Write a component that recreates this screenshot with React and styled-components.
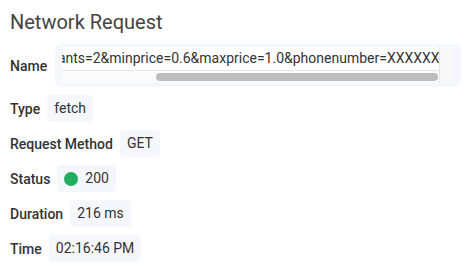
import React, { useEffect, useRef, useState } from 'react';
import styled, { createGlobalStyle } from 'styled-components';

const GlobalStyle = createGlobalStyle`
  body {
    margin: 0;
    background: #fff;
    font-family: Roboto, "Liberation Sans", Arial, sans-serif;
    color: #333;
  }
`;

const Panel = styled.article`
  padding: 10px 10px 4px 10px;
`;

const Title = styled.h1`
  margin: 0 0 10px 0;
  font-size: 20px;
  line-height: 24px;
  font-weight: 400;
  color: #444;
`;

const Rows = styled.section`
  display: flex;
  flex-direction: column;
  gap: 8px;
`;

const Row = styled.div`
  display: flex;
  align-items: center;
  gap: ${p => (p.$wide ? '8px' : '7px')};
`;

const Label = styled.span`
  font-size: 14px;
  font-weight: 500;
  color: #333;
  white-space: nowrap;
  flex-shrink: 0;
`;

const Chip = styled.span`
  display: inline-flex;
  align-items: center;
  gap: 7px;
  padding: 5px 7px;
  line-height: 17px;
  font-size: 14px;
  background: #f6f7fd;
  border-radius: 4px;
  color: #333;
`;

const UrlBox = styled.div`
  flex: 1;
  min-width: 0;
  background: #f6f7fd;
  border-radius: 7px;
  padding: 3px 8px 4px 7px;
`;

const Frame = styled.div`
  display: grid;
  grid-template-columns: 1fr 14px;
  grid-template-rows: 23px 13px;
`;

const Viewport = styled.div`
  overflow: hidden;
  background: #fff;
  white-space: nowrap;
  font-size: 14px;
  line-height: 23px;
  color: #333;
`;

const VTrack = styled.div`
  grid-row: 1 / span 2;
  grid-column: 2;
  background: #f8f8f8;
  border-left: 1px solid #e6e6e6;
`;

const HTrack = styled.div`
  position: relative;
  background: #fbfbfb;
  border-top: 1px solid #e6e6e6;
`;

const Thumb = styled.div`
  position: absolute;
  top: 2px;
  height: 8px;
  border-radius: 4px;
  background: #bdbdbd;
`;

const Dot = styled.span`
  width: 14px;
  height: 14px;
  border-radius: 50%;
  background: ${p => p.color};
`;

const url = 'api/activity?participants=2&minprice=0.6&maxprice=1.0&phonenumber=XXXXXX';

function UrlField({ value }) {
  const viewRef = useRef(null);
  const [thumb, setThumb] = useState({ left: 0, width: 0 });

  useEffect(() => {
    const el = viewRef.current;
    if (!el) return;
    el.scrollLeft = el.scrollWidth;
    const track = el.clientWidth;
    const width = (el.clientWidth / el.scrollWidth) * track;
    const left = (el.scrollLeft / el.scrollWidth) * track - 1;
    setThumb({ left, width });
  }, [value]);

  return (
    <UrlBox>
      <Frame>
        <Viewport ref={viewRef}>{value}</Viewport>
        <VTrack />
        <HTrack>
          <Thumb style={{ left: thumb.left, width: thumb.width }} />
        </HTrack>
      </Frame>
    </UrlBox>
  );
}

export default function App() {
  return (
    <>
      <GlobalStyle />
      <Panel>
        <Title>Network Request</Title>
        <Rows>
          <Row $wide>
            <Label>Name</Label>
            <UrlField value={url} />
          </Row>
          <Row>
            <Label>Type</Label>
            <Chip>fetch</Chip>
          </Row>
          <Row>
            <Label>Request Method</Label>
            <Chip>GET</Chip>
          </Row>
          <Row>
            <Label>Status</Label>
            <Chip>
              <Dot color="#22ae5f" />
              200
            </Chip>
          </Row>
          <Row>
            <Label>Duration</Label>
            <Chip>216 ms</Chip>
          </Row>
          <Row>
            <Label>Time</Label>
            <Chip>02:16:46 PM</Chip>
          </Row>
        </Rows>
      </Panel>
    </>
  );
}
